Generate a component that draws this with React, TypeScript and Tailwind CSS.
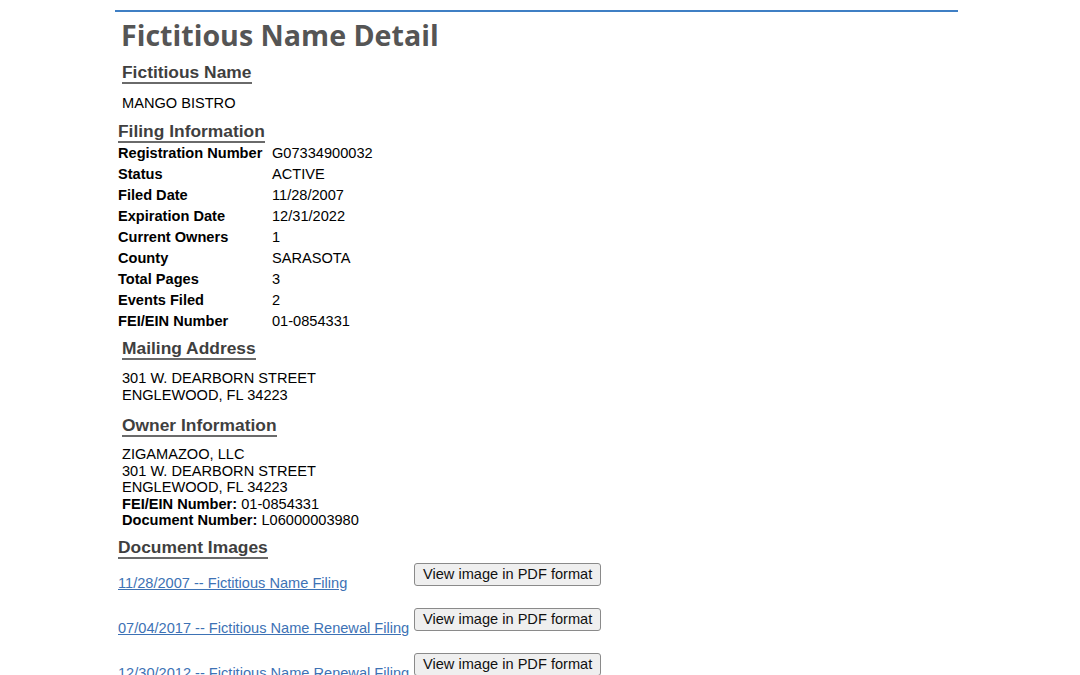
const filing = [
  ["Registration Number", "G07334900032"],
  ["Status", "ACTIVE"],
  ["Filed Date", "11/28/2007"],
  ["Expiration Date", "12/31/2022"],
  ["Current Owners", "1"],
  ["County", "SARASOTA"],
  ["Total Pages", "3"],
  ["Events Filed", "2"],
  ["FEI/EIN Number", "01-0854331"],
]

const docs = [
  "11/28/2007 -- Fictitious Name Filing",
  "07/04/2017 -- Fictitious Name Renewal Filing",
  "12/30/2012 -- Fictitious Name Renewal Filing",
]

function SectionTitle({ children, className = "" }: { children: React.ReactNode; className?: string }) {
  return (
    <div className={`flex ${className}`}>
      <span className="border-b-2 border-[#6a6a6a] text-[17.4px] leading-[19px] font-bold text-[#3f3f3f]">
        {children}
      </span>
    </div>
  )
}

export default function App() {
  return (
    <div className="min-h-[675px] bg-white pt-[10px] font-['Liberation_Sans',Arial,sans-serif] text-[14.6px] text-black">
      <div className="ml-[115px] w-[843px] border-t-2 border-[#3f7fc4]">
        <h1 className="ml-[6px] mt-[5px] font-['Open_Sans',sans-serif] text-[28.6px] leading-[36px] font-bold text-[#555555]">
          Fictitious Name Detail
        </h1>

        <SectionTitle className="ml-[7px] mt-[10px]">Fictitious Name</SectionTitle>
        <p className="ml-[7px] mt-[11px] leading-[17px]">MANGO BISTRO</p>

        <SectionTitle className="ml-[3px] mt-[10px]">Filing Information</SectionTitle>
        <div className="ml-[3px]">
          {filing.map(([label, value]) => (
            <div key={label} className="flex leading-[21px]">
              <span className="w-[154px] font-bold">{label}</span>
              <span>{value}</span>
            </div>
          ))}
        </div>

        <SectionTitle className="ml-[7px] mt-[7px]">Mailing Address</SectionTitle>
        <div className="ml-[7px] mt-[10px] leading-[17px]">
          <p>301 W. DEARBORN STREET</p>
          <p>ENGLEWOOD, FL 34223</p>
        </div>

        <SectionTitle className="ml-[7px] mt-[12px]">Owner Information</SectionTitle>
        <div className="ml-[7px] mt-[9px] leading-[16.5px]">
          <p>ZIGAMAZOO, LLC</p>
          <p>301 W. DEARBORN STREET</p>
          <p>ENGLEWOOD, FL 34223</p>
          <p>
            <span className="font-bold">FEI/EIN Number:</span> 01-0854331
          </p>
          <p>
            <span className="font-bold">Document Number:</span> L06000003980
          </p>
        </div>

        <SectionTitle className="ml-[3px] mt-[9px]">Document Images</SectionTitle>
        <div className="ml-[3px] flex flex-col gap-[12px]">
          {docs.map((d) => (
            <div key={d} className="flex h-[33px] items-end">
              <a href="#" className="w-[296px] leading-[17px] text-[#3d72b5] underline">
                {d}
              </a>
              <button className="mb-[6px] h-[23px] rounded-[3px] border border-[#8a8a8a] bg-[#efefef] px-[8px] leading-[21px] text-[#111]">
                View image in PDF format
              </button>
            </div>
          ))}
        </div>
      </div>
    </div>
  )
}
